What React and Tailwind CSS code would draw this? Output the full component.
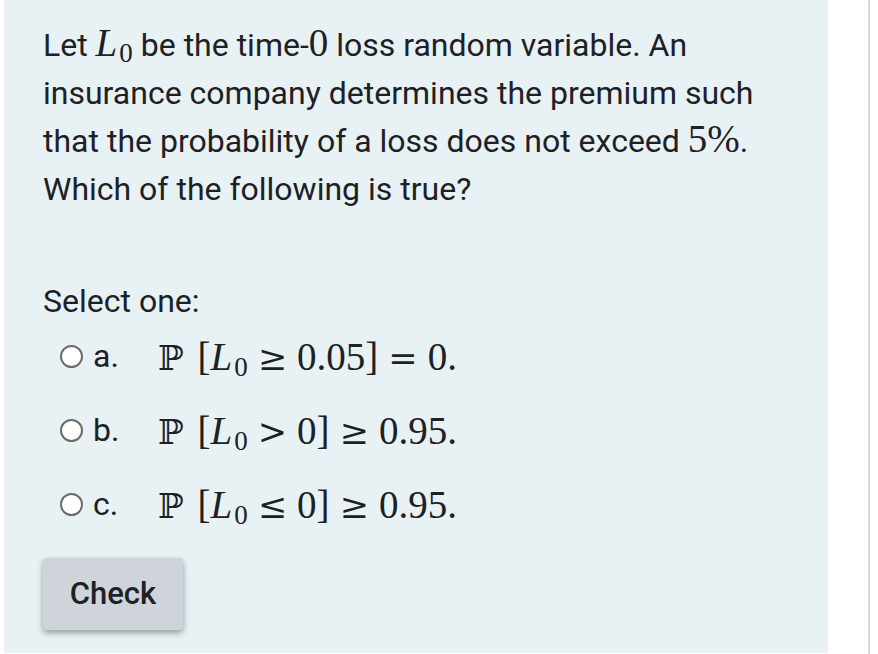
import React from "react";

const serif = { fontFamily: '"Liberation Serif", "Times New Roman", serif' };

function L0() {
  return (
    <span className="whitespace-nowrap">
      <span className="italic">L</span>
      <span className="text-[27px] relative top-[6px] ml-[2px]">0</span>
    </span>
  );
}

function M({ children }) {
  return (
    <span className="text-[39px] leading-none" style={serif}>
      {children}
    </span>
  );
}

function BB() {
  return (
    <span className="text-[34px]" style={{ fontFamily: '"DejaVu Serif", serif' }}>
      ℙ
    </span>
  );
}

function Rel({ children }) {
  return (
    <span
      className="mx-[10px] text-[35px] leading-none"
      style={{ fontFamily: '"DejaVu Serif", serif' }}
    >
      {children}
    </span>
  );
}

function Option({ label, children }) {
  return (
    <div className="flex items-center h-[74px]">
      <span className="ml-[17px] w-[23px] h-[23px] rounded-full border-2 border-[#6b6b6b] bg-white shrink-0" />
      <span className="ml-[10px] w-[65px]">{label}</span>
      <span className="flex items-baseline text-[39px] leading-none whitespace-nowrap" style={serif}>
        {children}
      </span>
    </div>
  );
}

export default function App() {
  return (
    <div
      className="flex w-[878px] h-[654px] bg-white text-[#1d2125] overflow-hidden"
      style={{ fontFamily: 'Roboto, "Liberation Sans", sans-serif' }}
    >
      <div className="ml-[4px] w-[824px] h-[653px] bg-[#e8f1f4] pl-[39px] pr-[38px] pt-[21px] text-[32px] leading-[48px]">
        <p>
          Let <M><L0 /></M> be the time-<M>0</M> loss random variable. An insurance company determines the premium such that the probability of a loss does not exceed <M>5%</M>. Which of the following is true?
        </p>
        <div className="mt-[64px] h-[42px]">Select one:</div>
        <Option label="a.">
          <BB />
          <span className="ml-[14px]">[</span>
          <L0 />
          <Rel>≥</Rel>
          <span>0.05]</span>
          <Rel>=</Rel>
          <span>0.</span>
        </Option>
        <Option label="b.">
          <BB />
          <span className="ml-[14px]">[</span>
          <L0 />
          <Rel>&gt;</Rel>
          <span>0]</span>
          <Rel>≥</Rel>
          <span>0.95.</span>
        </Option>
        <Option label="c.">
          <BB />
          <span className="ml-[14px]">[</span>
          <L0 />
          <Rel>≤</Rel>
          <span>0]</span>
          <Rel>≥</Rel>
          <span>0.95.</span>
        </Option>
        <button className="mt-[17px] w-[140px] h-[72px] bg-[#ced4da] rounded-[4px] font-medium text-[31px] text-[#1d2125] shadow-[0_3px_6px_rgba(0,0,0,0.35)]">
          Check
        </button>
      </div>
      <div className="ml-[40px] w-[2px] h-full bg-[#d9d9d9]" />
    </div>
  );
}
